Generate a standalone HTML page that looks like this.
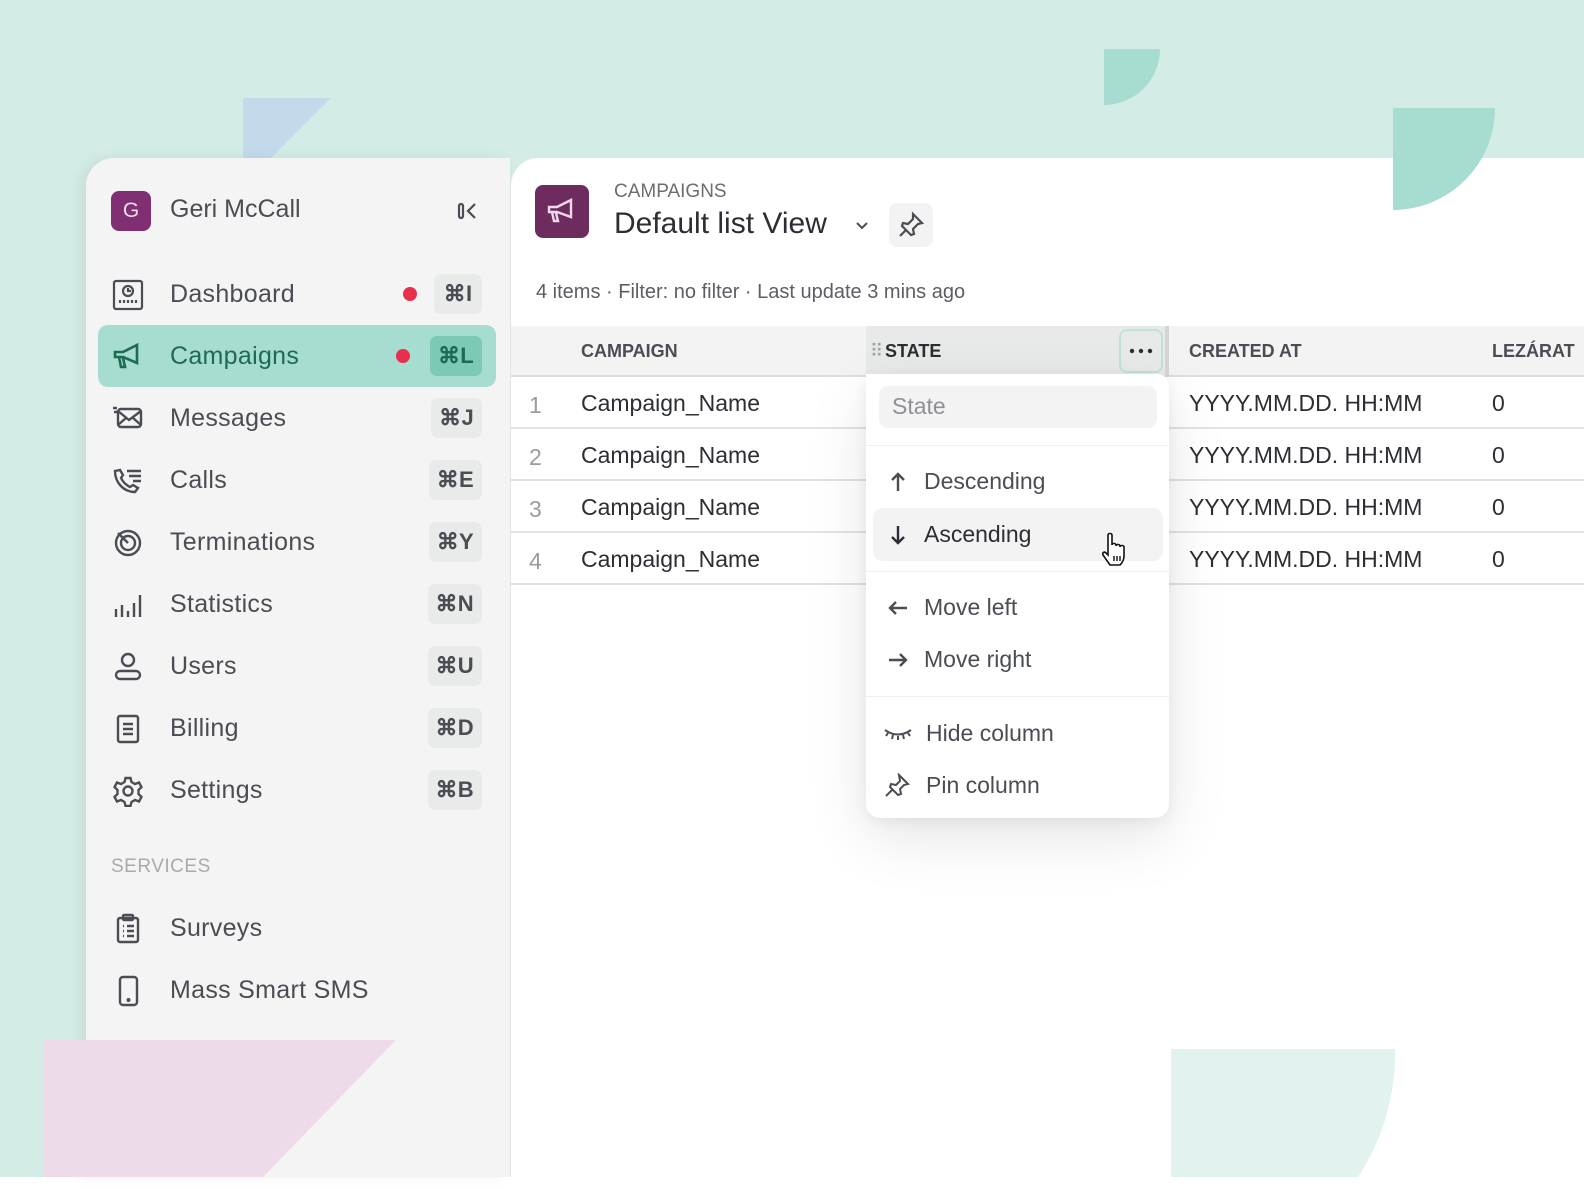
<!DOCTYPE html>
<html><head><meta charset="utf-8"><style>
*{margin:0;padding:0;box-sizing:border-box}
body{width:1584px;height:1189px;overflow:hidden;background:#fff;font-family:"Liberation Sans",sans-serif;position:relative}
.a{position:absolute}
.bg{left:0;top:0;width:1584px;height:1177px;background:#d4ece6}
.side{left:86px;top:158px;width:424px;height:1019px;background:#f4f4f4;border-top-left-radius:28px;box-shadow:-6px 0 14px rgba(0,0,0,0.06)}
.main{left:510px;top:158px;width:1074px;height:1019px;background:#fff;border-top-left-radius:28px;border-left:1px solid #e4e4e4}
.nav{left:98px;width:398px;height:62px;display:flex;align-items:center;font-size:25px;color:#4a4d53;letter-spacing:0.3px}
.nav svg{position:absolute;left:14px;top:16px}
.nav .t{position:absolute;left:72px}
.kbd{position:absolute;right:14px;top:11px;height:40px;min-width:48px;padding:0 8px;border-radius:7px;background:#e9eaea;font-size:22px;color:#4a4d53;display:flex;align-items:center;justify-content:center;font-weight:bold}
.dot{position:absolute;width:14px;height:14px;border-radius:50%;background:#e8304d;top:24px}
.cell{font-size:23px;color:#2b2e33}
.row{left:511px;width:1073px;height:52px;border-bottom:2px solid #e2e2e2}
.mi{left:886px;font-size:23px;color:#4a4d53;display:flex;align-items:center}
.mi svg{margin-right:14px}
</style></head><body>
<div class="a bg"></div>
<svg class="a" style="left:0;top:0" width="1584" height="1189">
<polygon points="243,98 331,98 271,158 243,158" fill="#c3d9ec"/>
<path d="M1104,49 H1160 A56,56 0 0 1 1104,105 Z" fill="#a7dcd0"/>
</svg>
<div class="a side"></div>
<div class="a main"></div>
<svg class="a" style="left:0;top:0" width="1584" height="1189">
<path d="M1393,108 H1495 A102,102 0 0 1 1393,210 Z" fill="#a7dcd0"/>
<polygon points="43,1040 396,1040 263,1177 43,1177" fill="#eedbea"/>
<path d="M1171,1049 H1395 A224,224 0 0 1 1358,1177 H1171 Z" fill="#e2f3ef"/>
</svg>

<div class="a" style="left:111px;top:191px;width:40px;height:40px;border-radius:8px;background:#7f2f72;color:#f0d9ec;font-size:21px;display:flex;align-items:center;justify-content:center">G</div>
<div class="a" style="left:170px;top:195px;font-size:25px;color:#4a4d53">Geri McCall</div>
<svg class="a" style="left:457px;top:201px" width="22" height="20" fill="none" stroke="#4a4d53" stroke-width="2.2"><rect x="2" y="3" width="4" height="14" rx="2"/><path d="M18 3 L11 10 L18 17"/></svg>

<div class="a nav" style="top:263px"><svg width="32" height="32" fill="none" stroke="#4a4d53" stroke-width="2.2"><rect x="2" y="2" width="28" height="28" rx="2"/><circle cx="16" cy="12" r="5"/><path d="M16 9v3h3M8 24v-3M12 24v-3M16 24v-3M20 24v-3M24 24v-3"/></svg><span class="t">Dashboard</span><span class="dot" style="left:305px"></span><span class="kbd">⌘I</span></div>
<div class="a nav" style="top:325px;background:#a7dcd0;border-radius:10px;color:#1d6b52"><svg width="32" height="32" fill="none" stroke="#1d6b52" stroke-width="2.6"><path d="M3 11h8l14-7v18l-14-6H3z M7 16l2 10h4l-2-9"/></svg><span class="t">Campaigns</span><span class="dot" style="left:298px"></span><span class="kbd" style="background:#7cc9b5;color:#1d6b52">⌘L</span></div>
<div class="a nav" style="top:387px"><svg width="32" height="32" fill="none" stroke="#4a4d53" stroke-width="2.4"><rect x="6" y="6" width="23" height="18" rx="3"/><path d="M6 8l11 9 12-9M6 22l8-7M29 22l-8-7M1 5h4M2 9h3"/></svg><span class="t">Messages</span><span class="kbd">⌘J</span></div>
<div class="a nav" style="top:449px"><svg width="32" height="32" fill="none" stroke="#4a4d53" stroke-width="2.4"><path d="M3 6c0 12 9 21 20 21l3-4-5-3-3 2c-4-2-7-5-9-9l2-3-3-5z M15 6h14M17 11h12M21 16h8"/></svg><span class="t">Calls</span><span class="kbd">⌘E</span></div>
<div class="a nav" style="top:511px"><svg width="32" height="32" fill="none" stroke="#4a4d53" stroke-width="2.4"><circle cx="16" cy="16" r="12"/><circle cx="16" cy="16" r="7"/><path d="M16 16L6 6"/></svg><span class="t">Terminations</span><span class="kbd">⌘Y</span></div>
<div class="a nav" style="top:573px"><svg width="32" height="32" fill="none" stroke="#4a4d53" stroke-width="2.4"><path d="M4 28v-8M10 28v-12M16 28v-6M22 28v-14M28 28v-22"/></svg><span class="t">Statistics</span><span class="kbd">⌘N</span></div>
<div class="a nav" style="top:635px"><svg width="32" height="32" fill="none" stroke="#4a4d53" stroke-width="2.4"><circle cx="16" cy="9" r="6"/><rect x="4" y="20" width="24" height="8" rx="4"/></svg><span class="t">Users</span><span class="kbd">⌘U</span></div>
<div class="a nav" style="top:697px"><svg width="32" height="32" fill="none" stroke="#4a4d53" stroke-width="2.4"><rect x="6" y="3" width="20" height="26" rx="2"/><path d="M11 11h10M11 16h10M11 21h10"/></svg><span class="t">Billing</span><span class="kbd">⌘D</span></div>
<div class="a nav" style="top:759px"><svg width="32" height="32" fill="none" stroke="#4a4d53" stroke-width="2.4"><circle cx="16" cy="16" r="4.5"/><path d="M13.5 3h5l1 4 3.5 2 4-1.5 2.5 4.5-3 3v4l3 3-2.5 4.5-4-1.5-3.5 2-1 4h-5l-1-4-3.5-2-4 1.5-2.5-4.5 3-3v-4l-3-3 2.5-4.5 4 1.5 3.5-2z"/></svg><span class="t">Settings</span><span class="kbd">⌘B</span></div>
<div class="a" style="left:111px;top:856px;font-size:19px;color:#a8aaad;letter-spacing:0.5px">SERVICES</div>
<div class="a nav" style="top:897px"><svg width="32" height="32" fill="none" stroke="#4a4d53" stroke-width="2.4"><rect x="6" y="5" width="20" height="24" rx="2"/><rect x="11" y="2" width="10" height="5" rx="1"/><path d="M11 13h1M11 18h1M11 23h1M15 13h7M15 18h7M15 23h7"/></svg><span class="t">Surveys</span></div>
<div class="a nav" style="top:959px"><svg width="32" height="32" fill="none" stroke="#4a4d53" stroke-width="2.4"><rect x="8" y="2" width="17" height="28" rx="3"/><circle cx="16.5" cy="25" r="0.8" fill="#4a4d53"/></svg><span class="t">Mass Smart SMS</span></div>

<div class="a" style="left:535px;top:185px;width:54px;height:53px;border-radius:8px;background:#6e2b5e"></div>
<svg class="a" style="left:545px;top:196px" width="34" height="32" fill="none" stroke="#f0d9ec" stroke-width="2.4"><path d="M4 11h8l14-7v17l-14-5H4z M7 16l2 9h4l-2-8"/></svg>
<div class="a" style="left:614px;top:181px;font-size:19px;color:#6b6e73">CAMPAIGNS</div>
<div class="a" style="left:614px;top:207px;font-size:30px;color:#2b2e33">Default list View</div>
<svg class="a" style="left:855px;top:220px" width="14" height="12" fill="none" stroke="#4a4d53" stroke-width="2"><path d="M2 3l5 5 5-5"/></svg>
<div class="a" style="left:889px;top:203px;width:44px;height:44px;border-radius:8px;background:#f3f3f3"></div>
<svg class="a" style="left:897px;top:211px" width="28" height="28" fill="none" stroke="#4a4d53" stroke-width="2.2"><path d="M16 3l9 9-4 1-5 5 1 5-3 1-9-9 1-3 5 1 5-5z M9 19l-6 6"/></svg>
<div class="a" style="left:536px;top:281px;font-size:20px;color:#5b5e63">4 items · Filter: no filter · Last update 3 mins ago</div>

<div class="a" style="left:511px;top:326px;width:1073px;height:51px;background:#f3f3f3;border-bottom:2px solid #dedede"></div>
<div class="a" style="left:866px;top:326px;width:300px;height:51px;background:#e8e9e9"></div>
<div class="a" style="left:1165px;top:326px;width:4px;height:51px;background:#d5d5d5"></div>
<div class="a" style="left:581px;top:341px;font-size:18px;color:#4a4d53;font-weight:bold">CAMPAIGN</div>
<div class="a" style="left:870px;top:341px;font-size:18px;color:#a0a2a5">⠿</div>
<div class="a" style="left:885px;top:341px;font-size:18px;color:#2b2e33;font-weight:bold">STATE</div>
<div class="a" style="left:1119px;top:329px;width:44px;height:44px;border-radius:8px;border:2px solid #bfe3d8"></div>
<svg class="a" style="left:1129px;top:347px" width="24" height="8" fill="#2b2e33"><circle cx="3" cy="4" r="2.2"/><circle cx="12" cy="4" r="2.2"/><circle cx="21" cy="4" r="2.2"/></svg>
<div class="a" style="left:1189px;top:341px;font-size:18px;color:#4a4d53;font-weight:bold">CREATED AT</div>
<div class="a" style="left:1492px;top:341px;font-size:18px;color:#4a4d53;font-weight:bold">LEZÁRAT</div>

<div class="a row" style="top:377px"></div>
<div class="a row" style="top:429px"></div>
<div class="a row" style="top:481px"></div>
<div class="a row" style="top:533px"></div>
<div class="a cell" style="left:529px;top:392px;color:#9a9ca0">1</div><div class="a cell" style="left:581px;top:390px">Campaign_Name</div><div class="a cell" style="left:1189px;top:390px">YYYY.MM.DD. HH:MM</div><div class="a cell" style="left:1492px;top:390px">0</div>
<div class="a cell" style="left:529px;top:444px;color:#9a9ca0">2</div><div class="a cell" style="left:581px;top:442px">Campaign_Name</div><div class="a cell" style="left:1189px;top:442px">YYYY.MM.DD. HH:MM</div><div class="a cell" style="left:1492px;top:442px">0</div>
<div class="a cell" style="left:529px;top:496px;color:#9a9ca0">3</div><div class="a cell" style="left:581px;top:494px">Campaign_Name</div><div class="a cell" style="left:1189px;top:494px">YYYY.MM.DD. HH:MM</div><div class="a cell" style="left:1492px;top:494px">0</div>
<div class="a cell" style="left:529px;top:548px;color:#9a9ca0">4</div><div class="a cell" style="left:581px;top:546px">Campaign_Name</div><div class="a cell" style="left:1189px;top:546px">YYYY.MM.DD. HH:MM</div><div class="a cell" style="left:1492px;top:546px">0</div>

<div class="a" style="left:866px;top:374px;width:303px;height:444px;background:#fff;border-radius:0 12px 14px 14px;box-shadow:0 20px 60px rgba(0,0,0,0.1),0 4px 14px rgba(0,0,0,0.06)"></div>
<div class="a" style="left:879px;top:386px;width:278px;height:42px;background:#f3f3f3;border-radius:9px;font-size:23px;color:#8e9095;padding:7px 13px">State</div>
<div class="a" style="left:866px;top:445px;width:303px;height:1px;background:#efefef"></div>
<div class="a" style="left:873px;top:508px;width:290px;height:53px;background:#f3f3f3;border-radius:10px"></div>
<div class="a" style="left:866px;top:571px;width:303px;height:1px;background:#efefef"></div>
<div class="a" style="left:866px;top:696px;width:303px;height:1px;background:#efefef"></div>
<div class="a mi" style="top:468px"><svg width="24" height="24" fill="none" stroke="#4a4d53" stroke-width="2.4"><path d="M12 21V4M6 10l6-6 6 6"/></svg>Descending</div>
<div class="a mi" style="top:521px;color:#2b2e33"><svg width="24" height="24" fill="none" stroke="#2b2e33" stroke-width="2.4"><path d="M12 3v17M6 14l6 6 6-6"/></svg>Ascending</div>
<div class="a mi" style="top:594px"><svg width="24" height="24" fill="none" stroke="#4a4d53" stroke-width="2.4"><path d="M21 12H4M10 6l-6 6 6 6"/></svg>Move left</div>
<div class="a mi" style="top:646px"><svg width="24" height="24" fill="none" stroke="#4a4d53" stroke-width="2.4"><path d="M3 12h17M14 6l6 6-6 6"/></svg>Move right</div>
<div class="a mi" style="top:720px;left:884px"><svg width="28" height="20" fill="none" stroke="#4a4d53" stroke-width="2"><path d="M1 6q13 9 26 0M4 9l-2 3M9 11l-1 4M14 12v4M19 11l1 4M24 9l2 3"/></svg>Hide column</div>
<div class="a mi" style="top:772px;left:884px"><svg width="28" height="26" fill="none" stroke="#4a4d53" stroke-width="2"><path d="M15 2l9 9-4 1-4 4 1 5-3 1-8-8 1-3 5 1 4-4z M8 17l-6 6"/></svg>Pin column</div>
<svg class="a" style="left:1100px;top:532px" width="30" height="36"><path d="M8 3c0-2 4-2 4 0v10c0-2 4-2 4 0v1c0-2 4-2 4 0v1c0-2 4-2 4 0v9c0 4-2 7-4 9h-10l-7-10c-1-2 1-4 3-2l2 2z" fill="#fff" stroke="#111" stroke-width="1.6"/><path d="M14 24v5M17 24v5M20 24v5" stroke="#111" stroke-width="1.4"/></svg>
</body></html>
